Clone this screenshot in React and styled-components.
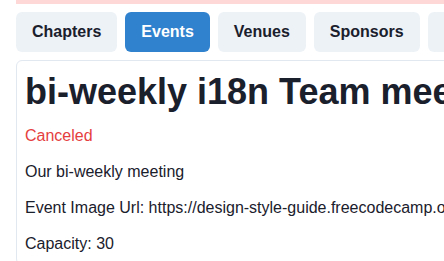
import React from 'react';
import styled, { createGlobalStyle } from 'styled-components';

const tabs = ['Chapters', 'Events', 'Venues', 'Sponsors', 'Users'];

const GlobalStyle = createGlobalStyle`
  html, body { margin: 0; padding: 0; background: #fff; }
  body {
    font-family: "Liberation Sans", Arial, sans-serif;
    color: #1a202c;
    overflow: hidden;
  }
`;

const Page = styled.div`
  padding: 0 0 0 16px;
  width: 700px;
`;

const AlertStrip = styled.div`
  height: 4px;
  background-color: #fed7d7;
`;

const TabRow = styled.nav`
  display: flex;
  gap: 8px;
  margin: 8px 0;
`;

const TabButton = styled.button`
  height: 40px;
  padding: 0 16px;
  border: none;
  border-radius: 6px;
  font-family: inherit;
  font-size: 16px;
  font-weight: 700;
  white-space: nowrap;
  background-color: ${p => (p.$active ? '#3182ce' : '#edf2f7')};
  color: ${p => (p.$active ? '#fff' : '#1a202c')};
`;

const Card = styled.section`
  border: 1px solid #e2e8f0;
  border-radius: 6px;
  padding: 11px 8px 8px;
  display: flex;
  flex-direction: column;
  gap: 12px;
`;

const Title = styled.h1`
  margin: 0;
  font-size: 36px;
  line-height: 40px;
  font-weight: 700;
  white-space: nowrap;
`;

const Text = styled.p`
  margin: 0;
  font-size: 16px;
  line-height: 24px;
  white-space: nowrap;
  color: ${p => p.$color || '#1a202c'};
`;

export default function App() {
  return (
    <Page>
      <GlobalStyle />
      <AlertStrip />
      <TabRow>
        {tabs.map(t => (
          <TabButton key={t} $active={t === 'Events'}>{t}</TabButton>
        ))}
      </TabRow>
      <Card>
        <Title>bi-weekly i18n Team meeting</Title>
        <Text $color="#e53e3e">Canceled</Text>
        <Text>Our bi-weekly meeting</Text>
        <Text>Event Image Url: https://design-style-guide.freecodecamp.org/img/fcc_secondary_small.svg</Text>
        <Text>Capacity: 30</Text>
      </Card>
    </Page>
  );
}
